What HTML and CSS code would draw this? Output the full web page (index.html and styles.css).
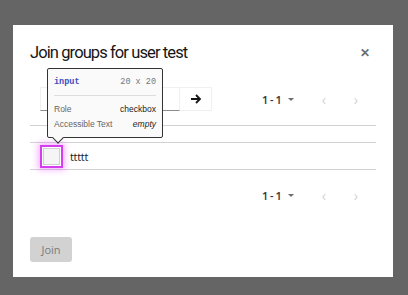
FILE: index.html
```html
<!DOCTYPE html>
<html lang="en">
<head>
    <meta charset="UTF-8">
    <title>Join groups</title>
    <link rel="stylesheet" href="styles.css">
</head>
<body>
    <div class="modal">
        <div class="modal-header">
            <h1>Join groups for user test</h1>
            <span class="close">&#x2715;</span>
        </div>
        <div class="toolbar">
            <div class="search">
                <div class="search-input"></div>
                <button class="search-btn">
                    <svg width="12" height="12" viewBox="0 0 12 12"><path d="M1 6h9M6 2l4 4-4 4" fill="none" stroke="#151515" stroke-width="1.8"/></svg>
                </button>
            </div>
            <div class="pagination">
                <span class="range">1 - 1</span>
                <span class="caret"></span>
                <span class="chev">&#x2039;</span>
                <span class="chev">&#x203A;</span>
            </div>
        </div>
        <div class="table-head"></div>
        <div class="table-row">
            <span class="checkbox"></span>
            <span class="row-text">ttttt</span>
        </div>
        <div class="footer-pagination">
            <div class="pagination">
                <span class="range">1 - 1</span>
                <span class="caret"></span>
                <span class="chev">&#x2039;</span>
                <span class="chev">&#x203A;</span>
            </div>
        </div>
        <button class="join">Join</button>

        <div class="tooltip">
            <div class="tip-head">
                <span class="tag">input</span>
                <span class="size">20 x 20</span>
            </div>
            <div class="tip-line"><span>Role</span><span class="val">checkbox</span></div>
            <div class="tip-line"><span>Accessible Text</span><span class="val empty">empty</span></div>
        </div>
    </div>
</body>
</html>
```

FILE: styles.css
```css
body {
    margin: 0;
    background-color: #656565;
    font-family: "Open Sans", Arial, sans-serif;
    color: #151515;
    height: 295px;
    overflow: hidden;
}
.modal {
    position: relative;
    margin: 25px 0 0 13px;
    width: 380px;
    height: 252px;
    box-sizing: border-box;
    background-color: #fff;
    padding: 15px 17px 0 17px;
}
.modal-header {
    display: flex;
    justify-content: space-between;
    align-items: center;
    height: 24px;
}
h1 {
    margin: 0;
    font-family: Roboto, sans-serif;
    font-size: 16.5px;
    font-weight: 400;
    letter-spacing: -0.9px;
    color: #151515;
}
.close {
    font-size: 12px;
    font-weight: bold;
    color: #6a6e73;
    margin-right: 6px;
    margin-top: 1px;
}
.toolbar {
    display: flex;
    justify-content: space-between;
    align-items: center;
    margin-top: 23px;
    padding: 0 0 14px 10px;
    border-bottom: 1px solid #d2d2d2;
}
.search {
    display: flex;
    height: 24px;
}
.search-input {
    width: 138px;
    border: 1px solid #f0f0f0;
    border-bottom-color: #8a8d90;
}
.search-btn {
    width: 32px;
    border: 1px solid #f0f0f0;
    border-left: none;
    background: #fff;
    display: flex;
    align-items: center;
    justify-content: center;
    padding: 0;
}
.pagination {
    display: flex;
    align-items: center;
    font-size: 11px;
    margin-right: 18px;
}
.range {
    word-spacing: -1px;
    font-weight: 600;
    color: #333;
}
.caret {
    width: 0;
    height: 0;
    border-left: 3px solid transparent;
    border-right: 3px solid transparent;
    border-top: 3px solid #6a6e73;
    margin: 0 28px 0 6px;
}
.chev {
    color: #d2d2d2;
    font-size: 14px;
    width: 32px;
    text-align: left;
}
.chev:last-child {
    width: auto;
}
.table-head {
    height: 16px;
    border-bottom: 1px solid #d2d2d2;
}
.table-row {
    display: flex;
    align-items: center;
    height: 26px;
    padding-left: 13px;
    border-bottom: 1px solid #d2d2d2;
}
.checkbox {
    width: 15px;
    height: 15px;
    border: 1px solid #d2d2d2;
    background: #f5f5f5;
    outline: 2px solid #d63cf0;
    outline-offset: 1px;
    box-shadow: 0 0 0 3px #fff, 0 0 6px 5px rgba(230, 90, 255, 0.45);
}
.row-text {
    font-size: 11px;
    margin-left: 10px;
    letter-spacing: -0.3px;
}
.footer-pagination {
    display: flex;
    justify-content: flex-end;
    align-items: center;
    height: 24px;
    margin-top: 13px;
}
.join {
    margin-top: 30px;
    width: 42px;
    height: 25px;
    border: none;
    border-radius: 3px;
    background-color: #d2d2d2;
    color: #7a7a7a;
    font-family: "Open Sans", sans-serif;
    font-size: 11px;
    padding: 0;
}
.tooltip {
    position: absolute;
    left: 34px;
    top: 43px;
    width: 116px;
    height: 70px;
    background: #fafafa;
    border: 1px solid #333;
    border-radius: 2px;
    padding: 0 6px;
    box-sizing: border-box;
    font-family: "Liberation Sans", Arial, sans-serif;
    font-size: 8.5px;
    color: #666;
}
.tooltip::after {
    content: "";
    position: absolute;
    left: 6px;
    bottom: -5px;
    width: 7px;
    height: 7px;
    background: #fafafa;
    border-right: 1px solid #333;
    border-bottom: 1px solid #333;
    transform: rotate(45deg);
}
.tip-head {
    display: flex;
    justify-content: space-between;
    align-items: center;
    height: 26px;
    border-bottom: 1px solid #ddd;
    margin-bottom: 5px;
    font-family: "Liberation Mono", monospace;
}
.tag {
    color: #3a4cc0;
    font-weight: bold;
}
.size {
    color: #777;
}
.tip-line {
    display: flex;
    justify-content: space-between;
    height: 15px;
    align-items: center;
}
.val {
    color: #222;
}
.empty {
    font-style: italic;
}
```
